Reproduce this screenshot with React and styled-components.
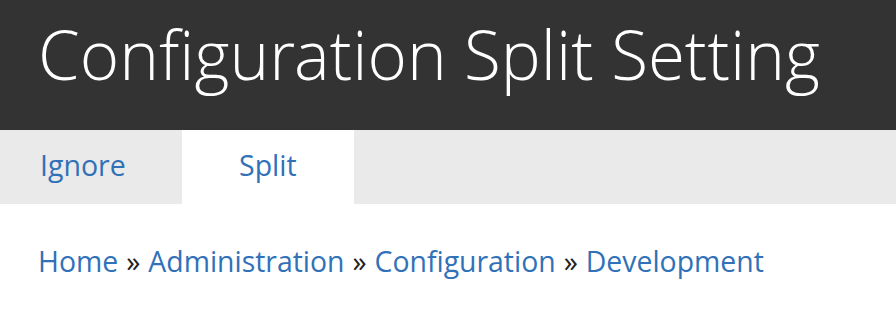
import React from 'react';
import styled, { createGlobalStyle } from 'styled-components';

const GlobalStyle = createGlobalStyle`
  html, body {
    margin: 0;
    padding: 0;
    background: #fff;
    font-family: "Open Sans", "Noto Sans", sans-serif;
  }
`;

const Header = styled.header`
  background: #333333;
  height: 130px;
  padding: 0 38px;
  display: flex;
  align-items: center;
  box-sizing: border-box;
`;

const Title = styled.h1`
  margin: 0;
  color: #fff;
  font-family: "Open Sans Light", "Open Sans", "Noto Sans", sans-serif;
  font-weight: 300;
  font-size: 67.3px;
  line-height: 1;
  white-space: nowrap;
  padding-bottom: 20px;
`;

const TabBar = styled.nav`
  background: #eaeaea;
  display: flex;
  height: 74px;
`;

const Tab = styled.a`
  display: flex;
  align-items: center;
  width: ${(p) => p.$width}px;
  padding-left: ${(p) => p.$inset}px;
  background: ${(p) => (p.$active ? '#fff' : 'transparent')};
  color: #3071b8;
  font-size: 28.5px;
  text-decoration: none;
  padding-bottom: 4px;
  box-sizing: border-box;
`;

const Breadcrumb = styled.ol`
  list-style: none;
  margin: 0;
  padding: 38px 38px 0;
  display: flex;
  align-items: baseline;
  font-size: 28.4px;
`;

const Crumb = styled.li`
  color: #222;
  white-space: nowrap;
  & + &::before {
    content: '»';
    padding: 0 8px;
    color: #222;
  }
`;

const CrumbLink = styled.a`
  color: #3071b8;
  text-decoration: none;
`;

const crumbs = ['Home', 'Administration', 'Configuration', 'Development'];

export default function App() {
  return (
    <>
      <GlobalStyle />
      <Header>
        <Title>Configuration Split Setting</Title>
      </Header>
      <TabBar>
        <Tab $width={182} $inset={40}>Ignore</Tab>
        <Tab $width={172} $inset={57} $active>Split</Tab>
      </TabBar>
      <Breadcrumb>
        {crumbs.map((c) => (
          <Crumb key={c}>
            <CrumbLink>{c}</CrumbLink>
          </Crumb>
        ))}
      </Breadcrumb>
    </>
  );
}
